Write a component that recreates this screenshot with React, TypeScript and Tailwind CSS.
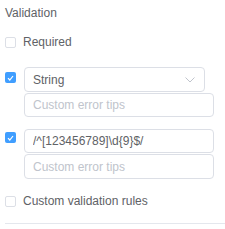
import React from "react";

function Box({ checked }: { checked?: boolean }) {
  if (checked) {
    return (
      <span className="flex h-[11px] w-[11px] shrink-0 items-center justify-center rounded-[2px] bg-[#409eff]">
        <svg width="7" height="6" viewBox="0 0 7 6" fill="none">
          <path d="M1 3.2 L2.8 5 L6 1" stroke="#ffffff" strokeWidth="1.2" />
        </svg>
      </span>
    );
  }
  return <span className="block h-[11px] w-[11px] shrink-0 rounded-[2px] border border-[#dcdfe6] bg-white" />;
}

const inputCls =
  "block rounded-[4px] border border-[#dcdfe6] bg-white px-[8px] text-[12px] text-[#606266] outline-none placeholder:text-[#c0c4cc] font-['Liberation_Sans',Arial,sans-serif]";

export default function App() {
  return (
    <div className="h-[229px] w-[225px] overflow-hidden bg-white pl-[5px] font-['Liberation_Sans',Arial,sans-serif] text-[12px] text-[#606266]">
      <div className="pt-[6px] leading-[14px]">Validation</div>

      <div className="mt-[16px] flex h-[12px] items-center gap-[7px] leading-[12px]">
        <Box />
        <span>Required</span>
      </div>

      <div className="mt-[19px] flex">
        <div className="w-[19px] pt-[5px]">
          <Box checked />
        </div>
        <div className="flex flex-col">
          <div className="flex h-[25px] w-[181px] items-center justify-between rounded-[4px] border border-[#dcdfe6] pl-[8px] pr-[9px]">
            <span>String</span>
            <svg width="10" height="6" viewBox="0 0 10 6" fill="none">
              <path d="M0.5 0.5 L5 5 L9.5 0.5" stroke="#c0c4cc" strokeWidth="1" />
            </svg>
          </div>
          <input readOnly placeholder="Custom error tips" className={`${inputCls} mt-[1px] h-[24px] w-[190px]`} />
        </div>
      </div>

      <div className="mt-[12px] flex">
        <div className="w-[19px] pt-[3px]">
          <Box checked />
        </div>
        <div className="flex flex-col">
          <input readOnly value="/^[123456789]\d{9}$/" className={`${inputCls} h-[24px] w-[190px]`} />
          <input readOnly placeholder="Custom error tips" className={`${inputCls} mt-[1px] h-[25px] w-[190px]`} />
        </div>
      </div>

      <div className="mt-[16px] flex h-[12px] items-center gap-[7px] leading-[12px]">
        <Box />
        <span>Custom validation rules</span>
      </div>

      <div className="mt-[16px] h-px w-[220px] bg-[#e4e7ed]" />
    </div>
  );
}
